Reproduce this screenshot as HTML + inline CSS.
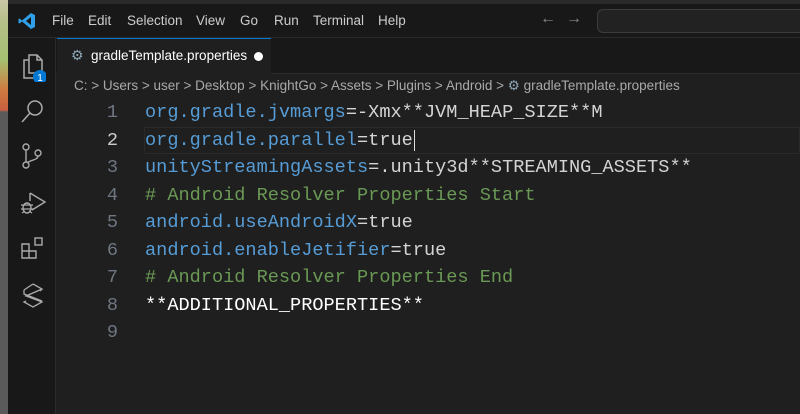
<!DOCTYPE html>
<html><head><meta charset="utf-8"><style>
*{margin:0;padding:0;box-sizing:border-box}
body{width:800px;height:414px;overflow:hidden;background:#3a3a3a;position:relative;font-family:"Liberation Sans",sans-serif}
.desk{position:absolute;left:0;top:0;width:8px;height:414px;background:linear-gradient(#c9c6a8 0,#b7c08a 20px,#a4c070 60px,#d07a40 90px,#c86040 110px,#5a5a5a 112px,#5a5a5a 414px)}
.deskt{position:absolute;left:0;top:0;width:800px;height:4px;background:#2a2a2a}
.win{position:absolute;left:8px;top:4px;width:792px;height:410px;background:#1f1f1f}
.title{position:absolute;left:0;top:0;width:792px;height:34px;background:#181818;border-bottom:1px solid #2b2b2b}
.menu{position:absolute;top:9px;color:#cccccc;font-size:13.5px}
.act{position:absolute;left:0;top:34px;width:48px;height:376px;background:#181818;border-right:1px solid #2b2b2b}
.tabs{position:absolute;left:48px;top:34px;width:744px;height:36px;background:#181818;border-bottom:1px solid #2b2b2b}
.tab{position:absolute;left:1px;top:0;width:214px;height:37px;background:#1f1f1f;border-top:1px solid #0078d4;color:#fff;font-size:13.5px}
.bc{position:absolute;left:66px;top:74px;color:#a9a9a9;font-size:13.5px;white-space:nowrap}
.code{position:absolute;left:0;top:95px;font-family:"Liberation Mono",monospace;font-size:18.6px;line-height:27.5px}
.ln{position:absolute;left:60px;width:50px;text-align:right;color:#6e7681}
.tx{position:absolute;left:137px;white-space:pre;color:#d4d4d4}
.k{color:#569cd6}.c{color:#6a9955}
.ic{position:absolute;left:12px}
</style></head><body>
<div class="deskt"></div><div class="desk"></div>
<div class="win">
<div class="title">
<svg style="position:absolute;left:10px;top:8px" width="18" height="18" viewBox="0 0 18 18"><path d="M13 1 L17 3 V15 L13 17 L4 9.5 L1.5 11.5 L0.5 11 V7 L1.5 6.5 L4 8.5 Z M13 5 L8 9 L13 13 Z" fill="#2f9fe8" fill-rule="evenodd"/></svg>
<span class="menu" style="left:44px">File</span><span class="menu" style="left:80px">Edit</span><span class="menu" style="left:119px">Selection</span><span class="menu" style="left:188px">View</span><span class="menu" style="left:232px">Go</span><span class="menu" style="left:266px">Run</span><span class="menu" style="left:305px">Terminal</span><span class="menu" style="left:370px">Help</span>
<span class="menu" style="left:532px;top:6px;font-size:16px;color:#888">←</span><span class="menu" style="left:558px;top:6px;font-size:16px;color:#888">→</span>
<div style="position:absolute;left:589px;top:5px;width:210px;height:24px;border:1px solid #3c3c3c;border-radius:6px;background:#222"></div>
</div>
<div class="act">
<svg class="ic" style="top:14px" width="26" height="30" viewBox="0 0 26 30"><path d="M9 3h8l5 5v13h-13z M17 3v5h5 M9 8H4v18h13v-5" fill="none" stroke="#aaa" stroke-width="1.5"/><circle cx="20" cy="25" r="7" fill="#0078d4"/><text x="20" y="29" fill="#fff" font-size="10" text-anchor="middle" font-family="Liberation Sans">1</text></svg>
<svg class="ic" style="top:60px" width="26" height="26" viewBox="0 0 26 26"><circle cx="15" cy="10" r="7" fill="none" stroke="#aaa" stroke-width="1.5"/><path d="M10 15L2 24" stroke="#aaa" stroke-width="1.5"/></svg>
<svg class="ic" style="top:105px" width="26" height="26" viewBox="0 0 26 26"><circle cx="6" cy="4" r="3" fill="none" stroke="#aaa" stroke-width="1.4"/><circle cx="6" cy="22" r="3" fill="none" stroke="#aaa" stroke-width="1.4"/><circle cx="18" cy="10" r="3" fill="none" stroke="#aaa" stroke-width="1.4"/><path d="M6 7v12 M18 13c0 4-8 4-11 7" fill="none" stroke="#aaa" stroke-width="1.4"/></svg>
<svg class="ic" style="top:152px" width="28" height="26" viewBox="0 0 28 26"><path d="M10 3 L25 12 L12 20 M10 3v8" fill="none" stroke="#aaa" stroke-width="1.4"/><ellipse cx="7" cy="18" rx="4" ry="5" fill="none" stroke="#aaa" stroke-width="1.4"/><path d="M1 15h12 M1 19h12 M2 23l3-2 M12 23l-3-2" stroke="#aaa" stroke-width="1.2"/></svg>
<svg class="ic" style="top:198px" width="26" height="26" viewBox="0 0 26 26"><path d="M2 8h7v7h7v7H2z M2 15h7v7 M9 15" fill="none" stroke="#aaa" stroke-width="1.4"/><rect x="15" y="2" width="7" height="7" fill="none" stroke="#aaa" stroke-width="1.4"/></svg>
<svg class="ic" style="top:244px" width="26" height="28" viewBox="0 0 26 28"><path d="M13 2 L22 7 L6 14 L22 20 L13 25 L4 20 L6 19 M22 7 L20 9 M4 8 L13 2 M4 8 L4 12 L22 19" fill="none" stroke="#aaa" stroke-width="1.3"/></svg>
</div>
<div class="tabs"><div class="tab">
<span style="position:absolute;left:14px;top:8px;color:#8fa7b8;font-size:14px">⚙</span>
<span style="position:absolute;left:34px;top:9px">gradleTemplate.properties</span>
<span style="position:absolute;left:197px;top:13px;width:9px;height:9px;border-radius:50%;background:#fff"></span>
</div></div>
<div class="bc">C: &gt; Users &gt; user &gt; Desktop &gt; KnightGo &gt; Assets &gt; Plugins &gt; Android &gt; <span style="color:#8fa7b8">⚙</span> gradleTemplate.properties</div>
<div style="position:absolute;left:136px;top:123px;width:656px;height:27px;border:1px solid #2a2a2a"></div>
<div class="code">
<div class="ln" style="top:0">1</div><div class="ln" style="top:27.5px;color:#ccc">2</div><div class="ln" style="top:55px">3</div><div class="ln" style="top:82.5px">4</div><div class="ln" style="top:110px">5</div><div class="ln" style="top:137.5px">6</div><div class="ln" style="top:165px">7</div><div class="ln" style="top:192.5px">8</div><div class="ln" style="top:220px">9</div>
<div class="tx" style="top:0"><span class="k">org.gradle.jvmargs</span>=-Xmx**JVM_HEAP_SIZE**M</div>
<div class="tx" style="top:27.5px"><span class="k">org.gradle.parallel</span>=true<span style="border-left:1.5px solid #ddd;margin-left:1px"></span></div>
<div class="tx" style="top:55px"><span class="k">unityStreamingAssets</span>=.unity3d**STREAMING_ASSETS**</div>
<div class="tx c" style="top:82.5px"># Android Resolver Properties Start</div>
<div class="tx" style="top:110px"><span class="k">android.useAndroidX</span>=true</div>
<div class="tx" style="top:137.5px"><span class="k">android.enableJetifier</span>=true</div>
<div class="tx c" style="top:165px"># Android Resolver Properties End</div>
<div class="tx" style="top:192.5px;color:#fff">**ADDITIONAL_PROPERTIES**</div>
</div>
</div>
</body></html>
